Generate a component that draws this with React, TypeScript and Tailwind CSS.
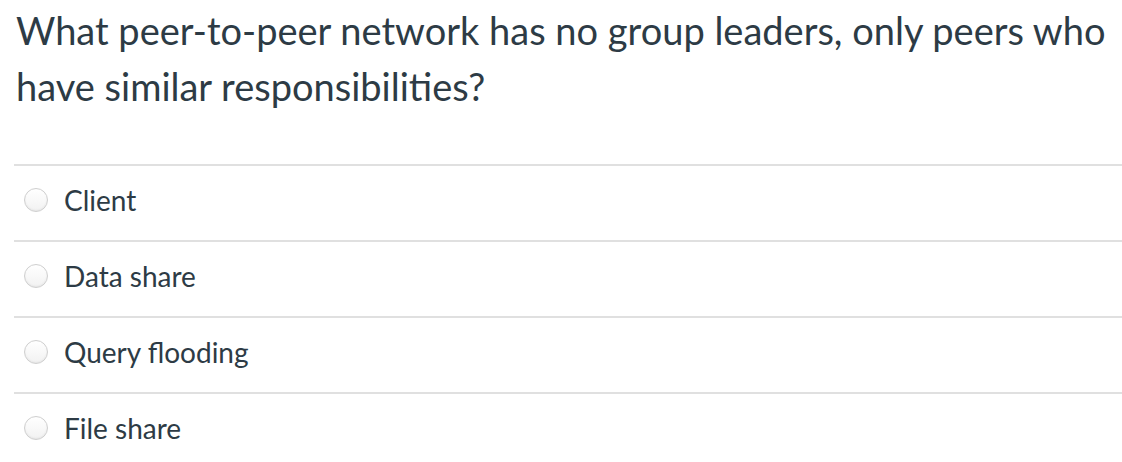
import React from 'react';

const answers = ['Client', 'Data share', 'Query flooding', 'File share'];

const Radio = () => (
  <span className="w-[24px] h-[24px] rounded-full border border-[#cfcfcf] bg-gradient-to-b from-white to-[#f2f2f2] shadow-[inset_0_-1px_2px_rgba(0,0,0,0.06)] flex-shrink-0" />
);

export default function App() {
  return (
    <div className="w-[1122px] h-[462px] bg-white overflow-hidden pl-[14px] text-[#2d3b45]" style={{ fontFamily: 'Lato, "Open Sans", sans-serif' }}>
      <div className="pl-[2px] pt-[2px] text-[38px] leading-[56px] h-[113px]">
        What peer-to-peer network has no group leaders, only peers who have similar responsibilities?
      </div>
      <div className="mt-[51px]">
        {answers.map((a) => (
          <div key={a} className="border-t-2 border-[#e0e0e0] h-[76px] flex items-center pl-[10px] pb-[6px] gap-[16px]">
            <Radio />
            <span className="text-[28px]">{a}</span>
          </div>
        ))}
      </div>
    </div>
  );
}
